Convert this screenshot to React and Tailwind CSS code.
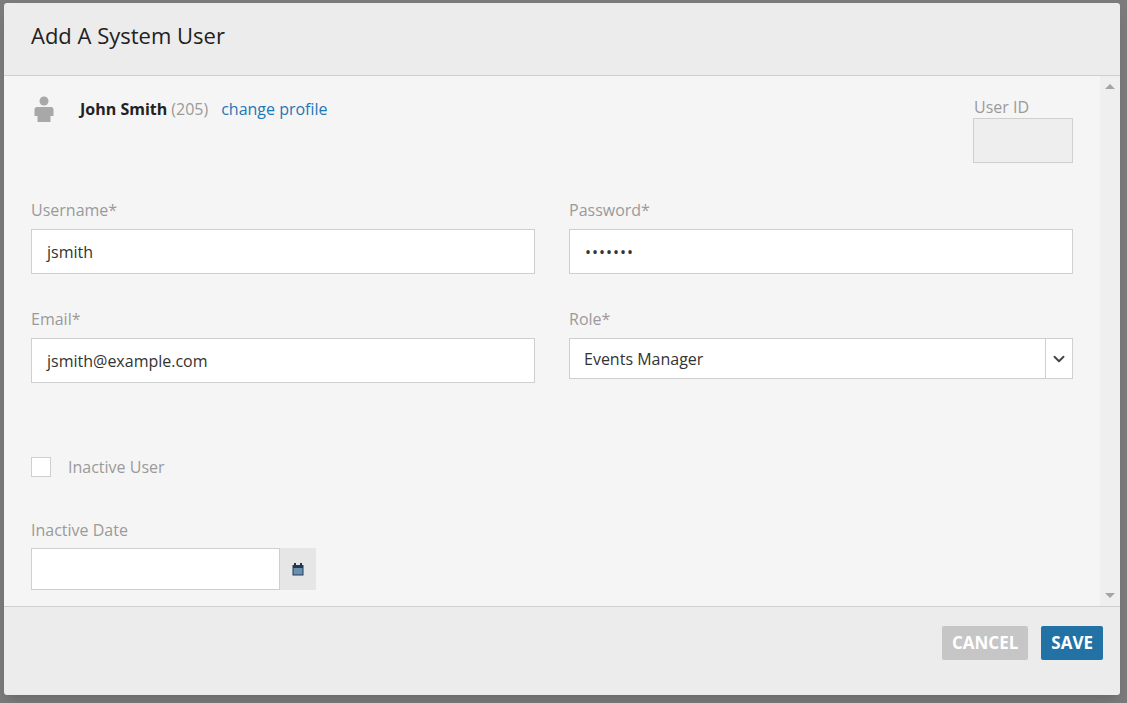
import { ChevronDown } from 'lucide-react';

const font = { fontFamily: '"Open Sans", "Liberation Sans", sans-serif' };

function Field({ label, children }) {
  return (
    <div className="flex flex-col">
      <div className="mb-[8px] text-[16px] leading-[22px] text-[#9a9a9a]">{label}</div>
      {children}
    </div>
  );
}

export default function App() {
  return (
    <div style={font} className="h-[703px] w-[1127px] overflow-hidden bg-[#7b7b7b] pl-[4px] pt-[3px]">
      <div className="flex h-[692px] w-[1116px] flex-col overflow-hidden rounded-[3px] bg-[#ececec] shadow-lg">
        <div className="flex h-[73px] items-start border-b border-[#cfcfcf] px-[27px] pt-[17px]">
          <h1 className="text-[22px] leading-[30px] text-[#222]">Add A System User</h1>
        </div>
        <div className="flex h-[530px] bg-[#f5f5f5]">
          <div className="flex-1 px-[27px] pt-[20px]">
            <div className="flex items-start justify-between">
              <div className="flex items-center">
                <svg width="20" height="26" viewBox="0 0 20 26" className="ml-[3px] fill-[#a8a8a8]">
                  <circle cx="10" cy="5" r="4.5" />
                  <path d="M3 11h14a2.5 2.5 0 0 1 2.5 2.5V20h-3v6h-13v-6h-3v-6.5A2.5 2.5 0 0 1 3 11z" />
                </svg>
                <span className="ml-[26px] text-[16px] font-bold text-[#222]">John Smith</span>
                <span className="ml-[4px] text-[16px] text-[#9a9a9a]">(205)</span>
                <span className="ml-[13px] text-[16px] text-[#1f77b4]">change profile</span>
              </div>
              <div className="flex flex-col">
                <div className="ml-[1px] text-[16px] leading-[22px] text-[#9a9a9a]">User ID</div>
                <div className="h-[45px] w-[100px] border border-[#cfcfcf] bg-[#eeeeee]" />
              </div>
            </div>
            <div className="mt-[36px] grid grid-cols-2 gap-x-[34px]">
              <Field label="Username*">
                <div className="flex h-[45px] items-center border border-[#cfcfcf] bg-white px-[15px] text-[16px] text-[#333]">jsmith</div>
              </Field>
              <Field label="Password*">
                <div className="flex h-[45px] items-center border border-[#cfcfcf] bg-white px-[15px] text-[16px] tracking-[1px] text-[#333]">•••••••</div>
              </Field>
            </div>
            <div className="mt-[34px] grid grid-cols-2 gap-x-[34px]">
              <Field label="Email*">
                <div className="flex h-[45px] items-center border border-[#cfcfcf] bg-white px-[15px] text-[16px] text-[#333]">jsmith@example.com</div>
              </Field>
              <Field label="Role*">
                <div className="flex h-[41px] items-center border border-[#cfcfcf] bg-white text-[16px] text-[#333]">
                  <span className="flex-1 px-[14px]">Events Manager</span>
                  <span className="flex h-full w-[27px] items-center justify-center border-l border-[#cfcfcf]">
                    <ChevronDown size={18} strokeWidth={2.5} className="text-[#444]" />
                  </span>
                </div>
              </Field>
            </div>
            <div className="mt-[72px] flex items-center">
              <div className="h-[20px] w-[20px] border border-[#cfcfcf] bg-white" />
              <span className="ml-[17px] text-[16px] text-[#9a9a9a]">Inactive User</span>
            </div>
            <div className="mt-[40px] text-[16px] leading-[22px] text-[#9a9a9a]">Inactive Date</div>
            <div className="mt-[7px] flex h-[42px] w-[285px]">
              <div className="flex-1 border border-[#cfcfcf] bg-white" />
              <div className="flex w-[36px] items-center justify-center bg-[#e6e6e6]">
                <svg width="12" height="13" viewBox="0 0 12 13">
                  <rect x="0.5" y="2" width="11" height="10.5" fill="#1f3a5a" />
                  <rect x="2" y="0" width="2" height="3" fill="#333" />
                  <rect x="8" y="0" width="2" height="3" fill="#333" />
                  <rect x="1.5" y="5" width="9" height="6.5" fill="#6c8fb0" />
                </svg>
              </div>
            </div>
          </div>
          <div className="flex w-[20px] flex-col items-center justify-between bg-[#efefef] py-[8px]">
            <div className="h-0 w-0 border-x-[5px] border-b-[5px] border-x-transparent border-b-[#a5a5a5]" />
            <div className="h-0 w-0 border-x-[5px] border-t-[5px] border-x-transparent border-t-[#a5a5a5]" />
          </div>
        </div>
        <div className="flex flex-1 justify-end gap-[13px] border-t border-[#cfcfcf] pr-[17px] pt-[19px]">
          <div className="flex h-[34px] items-center rounded-[2px] bg-[#c6c6c6] px-[10px] text-[17px] font-bold text-white">CANCEL</div>
          <div className="flex h-[34px] items-center rounded-[2px] bg-[#2372a6] px-[10px] text-[17px] font-bold text-white">SAVE</div>
        </div>
      </div>
    </div>
  );
}
